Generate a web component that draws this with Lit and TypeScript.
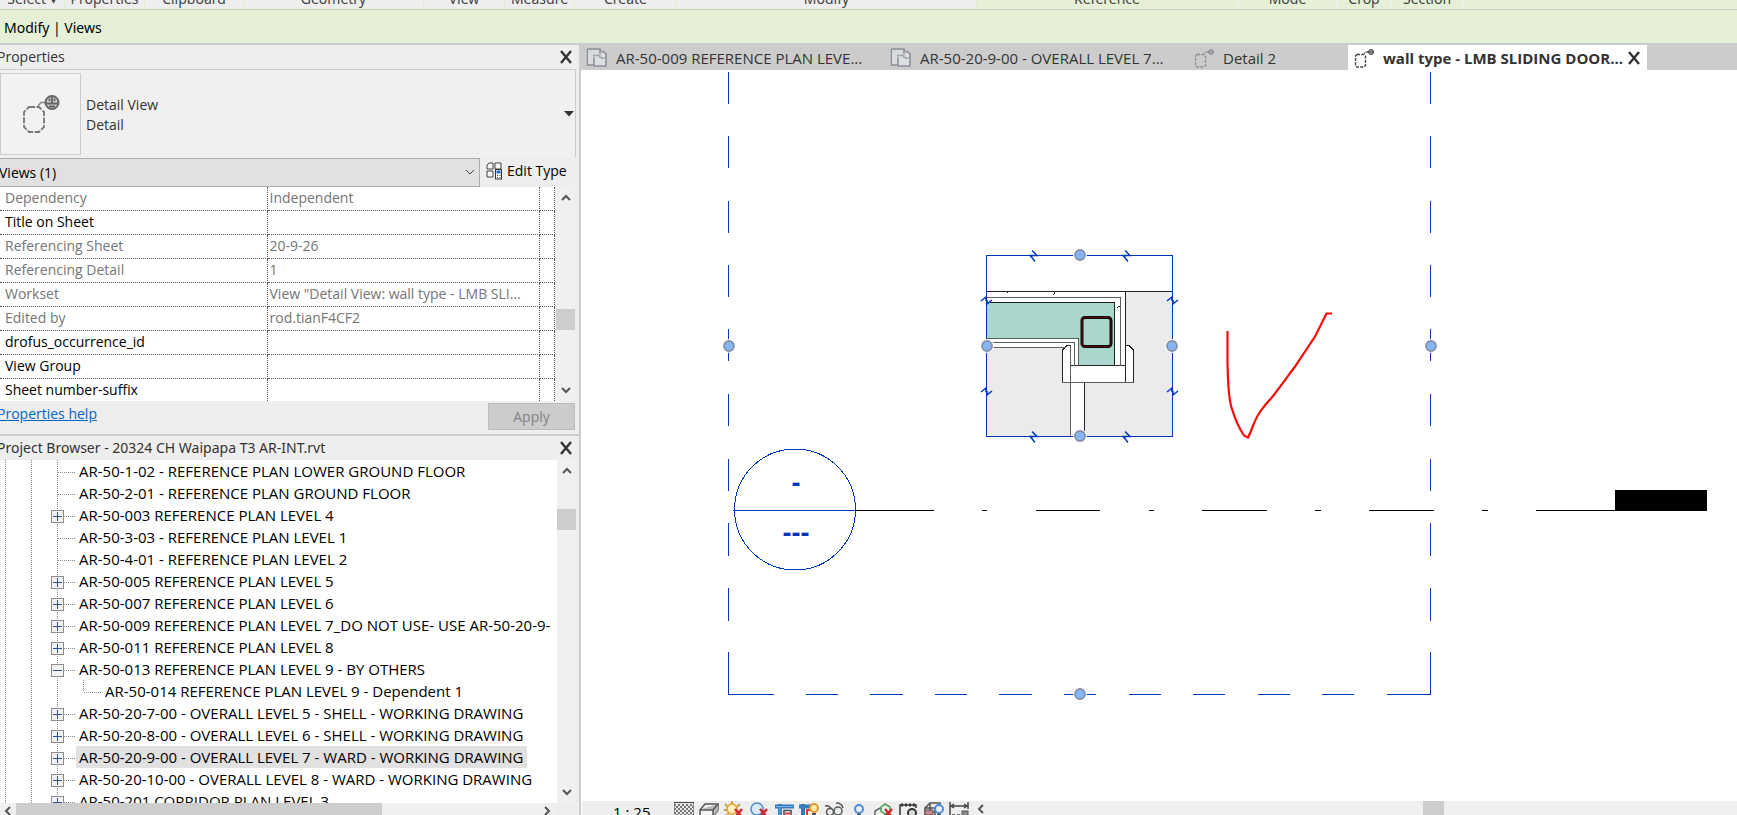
import { LitElement, html, svg, css, nothing } from "lit";
import { customElement, property } from "lit/decorators.js";
import { classMap } from "lit/directives/class-map.js";

const chevron = (dir: string) => {
  const paths: Record<string, string> = {
    up: "M3 9l4-4 4 4",
    down: "M3 5l4 4 4-4",
    left: "M9 3l-4 4 4 4",
    right: "M5 3l4 4-4 4",
  };
  return html`<svg width="14" height="14" viewBox="0 0 14 14" aria-hidden="true">
    <path d=${paths[dir]} fill="none" stroke="#555" stroke-width="2" />
  </svg>`;
};

const cross = html`<svg width="14" height="14" viewBox="0 0 14 14" aria-hidden="true">
  <path d="M2 1L12 13M12 1L2 13" fill="none" stroke="#333" stroke-width="2.4" />
</svg>`;

const detailIcon = (tone: string) => html`<svg width="20" height="20" viewBox="0 0 20 20" aria-hidden="true">
  <path d="M3 6.500H10L11.500 8V17.500L10 19H3L1.500 17.500V8Z" fill="none" stroke=${tone} stroke-width="1.400" stroke-dasharray="3 1.300" />
  <path d="M10 6L11.500 4H14" fill="none" stroke=${tone} />
  <circle cx="17" cy="4" r="2.500" fill="#aaa" stroke=${tone} />
  <path d="M13 4h7" stroke=${tone} />
</svg>`;

const detailIconLarge = html`<svg width="40" height="42" viewBox="0 0 40 42" aria-hidden="true">
  <path d="M8 14H18L23 19V34L18 39H8L3 34V19Z" fill="none" stroke="#777" stroke-width="1.800" stroke-dasharray="6 1.500" />
  <path d="M17 13L20 9.500H25" fill="none" stroke="#888" stroke-width="1.500" />
  <circle cx="31" cy="9.500" r="6.500" fill="#ccc" stroke="#666" stroke-width="2" />
  <path d="M24 10.500H38M31 4V10M28.500 5.500V8M33.500 5.500V8M28 13.500H34" stroke="#666" stroke-width="1.800" />
</svg>`;

const planIcon = html`<svg width="21" height="19" viewBox="0 0 21 19" aria-hidden="true">
  <path d="M1.500 1H14V5M8 17H1.500V1" fill="#d4d6d9" stroke="#8b8f96" stroke-width="1.600" />
  <path d="M2 2H13V16H2Z" fill="#d8dadd" />
  <path d="M14 3.500H17L20 6V18H8V12" fill="#dcdee1" stroke="#8b8f96" stroke-width="1.600" />
  <path d="M8 12V7.500H14M14 4V10H19" fill="none" stroke="#8b8f96" stroke-width="1.400" stroke-dasharray="2.500 1" />
</svg>`;

@customElement("scroll-strip")
export class ScrollStrip extends LitElement {
  @property() orientation = "vertical";
  @property({ type: Number }) start = 0;
  @property({ type: Number }) size = 20;
  @property() ends = "both";

  static styles = css`
    :host { display: flex; background: #f0f0f0; }
    :host([orientation="vertical"]) { width: 19px; flex-direction: column; }
    .end { display: flex; flex: none; align-items: center; justify-content: center; padding: 0; border: 0; background: none; width: 19px; height: 22px; }
    .row .end { width: 16px; height: 16px; }
    .strip { display: flex; flex: 1; min-width: 0; min-height: 0; flex-direction: column; }
    .strip.row { flex-direction: row; }
    .track { display: flex; flex: 1; min-width: 0; min-height: 0; flex-direction: column; }
    .row .track { flex-direction: row; }
    .thumb { flex: none; background: #cdcdcd; }
  `;

  render() {
    const v = this.orientation === "vertical";
    const side = v ? "height" : "width";
    return html`<div class=${classMap({ strip: true, row: !v })}>
      <button class="end" aria-label="Scroll back">${chevron(v ? "up" : "left")}</button>
      <div class="track">
        <div style=${`${side}:${this.start}%`}></div>
        <div class="thumb" style=${`${side}:${this.size}%`}></div>
      </div>
      ${this.ends === "both"
        ? html`<button class="end" aria-label="Scroll forward">${chevron(v ? "down" : "right")}</button>`
        : nothing}
    </div>`;
  }
}

interface Row { name: string; value?: string; locked?: boolean }
const rows: Row[] = [
  { name: "Dependency", value: "Independent", locked: true },
  { name: "Title on Sheet" },
  { name: "Referencing Sheet", value: "20-9-26", locked: true },
  { name: "Referencing Detail", value: "1", locked: true },
  { name: "Workset", value: 'View "Detail View: wall type - LMB SLI...', locked: true },
  { name: "Edited by", value: "rod.tianF4CF2", locked: true },
  { name: "drofus_occurrence_id" },
  { name: "View Group" },
  { name: "Sheet number-suffix" },
];

@customElement("properties-panel")
export class PropertiesPanel extends LitElement {
  static styles = css`
    :host { display: block; background: #eee; color: #333; }
    button { font: inherit; color: inherit; padding: 0; border: 0; background: none; }
    .head { display: flex; align-items: center; justify-content: space-between; height: 24px; padding-right: 6px; margin-left: -3px; line-height: 24px; }
    .head button { display: flex; }
    .type { display: flex; align-items: center; height: 88px; border: 1px solid #ccc; border-width: 1px 1px 0 0; margin-right: 3px; background: #f0f0f0; box-sizing: border-box; }
    .thumb { display: flex; align-items: center; justify-content: center; width: 81px; height: 82px; border: 1px solid #ccc; background: #f2f2f2; box-sizing: border-box; }
    .names { flex: 1; padding: 2px 0 0 5px; line-height: 20px; }
    .drop { width: 11px; height: 12px; display: flex; align-items: center; }
    .filter { display: flex; align-items: center; height: 30px; }
    .combo { display: grid; align-items: center; width: 480px; flex: none; }
    .combo select { grid-area: 1 / 1; appearance: none; height: 29px; border: 1px solid #adadad; border-left: 0; border-radius: 0; background: #e1e1e1; font: inherit; color: #000; padding: 1px 0 0; text-indent: -1px; }
    .combo svg { grid-area: 1 / 1; justify-self: end; margin-right: 3px; pointer-events: none; }
    .edit { display: flex; align-items: center; gap: 4px; padding: 0 0 2px 6px; color: #000; }
    .grid { display: flex; height: 214px; overflow: hidden; background: #eee; padding-right: 4px; }
    .clip { flex: 1; overflow: hidden; background: #fff; border-right: 1px solid #eee; }
    table { width: 100%; table-layout: fixed; border-collapse: collapse; color: #000; }
    th, td { height: 22px; padding: 0 0 1px; font-weight: 400; text-align: left; line-height: 22px; border-bottom: 1px dotted #555; border-right: 1px dotted #555; white-space: nowrap; overflow: hidden; }
    th { padding-left: 5px; }
    td { padding-left: 2px; }
    .name { width: 267px; }
    .more { width: 15px; }
    .locked { color: #757575; }
    .foot { display: flex; align-items: flex-start; justify-content: space-between; height: 33px; padding-right: 4px; margin-left: -3px; }
    .foot a { color: #0563c1; line-height: 26px; }
    .apply { width: 87px; height: 27px; margin-top: 2px; background: #ccc; border: 1px solid #bcbcbc; color: #838383; }
  `;

  render() {
    return html`
      <div class="head"><span>Properties</span><button aria-label="Close">${cross}</button></div>
      <div class="type">
        <div class="thumb">${detailIconLarge}</div>
        <div class="names"><div>Detail View</div><div>Detail</div></div>
        <button class="drop" aria-label="Change type">
          <svg width="10" height="6" viewBox="0 0 10 6"><path d="M0 0H10L5 5.500Z" fill="#333" /></svg>
        </button>
      </div>
      <div class="filter">
        <div class="combo">
          <select aria-label="Element filter"><option>Views (1)</option></select>
          <svg width="14" height="14" viewBox="0 0 14 14"><path d="M3 5l4 4 4-4" fill="none" stroke="#444" /></svg>
        </div>
        <button class="edit">
          <svg width="17" height="18" viewBox="0 0 17 18" aria-hidden="true">
            <path d="M1 3L3 1H7V7H1ZM9 1H15V7H9ZM1 9H7V15H1Z" fill="#f5f5f5" stroke="#444" />
            <rect x="9.500" y="7.500" width="6" height="9.500" fill="#fff" stroke="#333" />
            <rect x="10.500" y="8.500" width="4" height="3" fill="#1b66c9" />
            <path d="M11 13.500h1m1.500 0h1M11 15.500h1m1.500 0h1" stroke="#333" />
          </svg>
          <span>Edit Type</span>
        </button>
      </div>
      <div class="grid">
        <div class="clip">
          <table>
            <colgroup><col class="name" /><col /><col class="more" /></colgroup>
            <tbody>
              ${rows.map((r) => html`<tr class=${classMap({ locked: !!r.locked })}>
                <th scope="row">${r.name}</th><td>${r.value ?? nothing}</td><td></td>
              </tr>`)}
            </tbody>
          </table>
        </div>
        <scroll-strip orientation="vertical" start="59" size="12"></scroll-strip>
      </div>
      <div class="foot"><a href="#help">Properties help</a><button class="apply" disabled>Apply</button></div>
    `;
  }
}

interface Node { label: string; box?: "plus" | "minus"; child?: boolean; current?: boolean }
const nodes: Node[] = [
  { label: "AR-50-1-02 - REFERENCE PLAN LOWER GROUND FLOOR" },
  { label: "AR-50-2-01 - REFERENCE PLAN GROUND FLOOR" },
  { label: "AR-50-003 REFERENCE PLAN LEVEL 4", box: "plus" },
  { label: "AR-50-3-03 - REFERENCE PLAN LEVEL 1" },
  { label: "AR-50-4-01 - REFERENCE PLAN LEVEL 2" },
  { label: "AR-50-005 REFERENCE PLAN LEVEL 5", box: "plus" },
  { label: "AR-50-007 REFERENCE PLAN LEVEL 6", box: "plus" },
  { label: "AR-50-009 REFERENCE PLAN LEVEL 7_DO NOT USE- USE AR-50-20-9-00", box: "plus" },
  { label: "AR-50-011 REFERENCE PLAN LEVEL 8", box: "plus" },
  { label: "AR-50-013 REFERENCE PLAN LEVEL 9 - BY OTHERS", box: "minus" },
  { label: "AR-50-014 REFERENCE PLAN LEVEL 9 - Dependent 1", child: true },
  { label: "AR-50-20-7-00 - OVERALL LEVEL 5 - SHELL - WORKING DRAWING", box: "plus" },
  { label: "AR-50-20-8-00 - OVERALL LEVEL 6 - SHELL - WORKING DRAWING", box: "plus" },
  { label: "AR-50-20-9-00 - OVERALL LEVEL 7 - WARD - WORKING DRAWING", box: "plus", current: true },
  { label: "AR-50-20-10-00 - OVERALL LEVEL 8 - WARD - WORKING DRAWING", box: "plus" },
  { label: "AR-50-201 CORRIDOR PLAN LEVEL 3", box: "plus" },
];

@customElement("project-browser")
export class ProjectBrowser extends LitElement {
  static styles = css`
    :host { display: flex; flex-direction: column; min-height: 0; background: #eee; color: #333; }
    .head { display: flex; flex: none; align-items: center; justify-content: space-between; height: 24px; padding-right: 6px; margin-left: -3px; font-family: "Noto Sans", "Open Sans", sans-serif; line-height: 24px; }
    .head button { display: flex; padding: 0; border: 0; background: none; }
    .body { display: flex; flex: 1; min-height: 0; padding-right: 3px; }
    ul { flex: 1; min-width: 0; margin: 0; padding: 0; list-style: none; overflow: hidden; background: #fff; color: #000; border-right: 6px solid #fff; font-size: 15px; }
    li { display: flex; height: 22px; line-height: 22px; white-space: nowrap; }
    li svg { flex: none; }
    .label { padding: 0 3px; }
    .current { background: #e1e1e1; }
    scroll-strip.across { flex: none; height: 12px; overflow: hidden; margin-right: 24px; }
  `;

  private branch(n: Node) {
    const w = n.child ? 102 : 76;
    return html`<svg width=${w} height="22" aria-hidden="true" shape-rendering="crispEdges">
      <path d="M5.500 0V22M31.500 0V22M57.500 0V22" stroke="#888" stroke-dasharray="1 1" />
      ${n.child
        ? svg`<path d="M83.500 0V12M84 12.500H102" fill="none" stroke="#888" stroke-dasharray="1 1" />`
        : svg`<path d="M58 12.500H76" stroke="#888" stroke-dasharray="1 1" />`}
      ${n.box
        ? svg`<rect x="51.500" y="6.500" width="12" height="12" fill="#f2f2f2" stroke="#8c8c8c" />
            <path d=${n.box === "plus" ? "M53 12.500H62M57.500 8V17" : "M53 12.500H62"} stroke="#34529c" />`
        : nothing}
    </svg>`;
  }

  render() {
    return html`
      <div class="head"><span>Project Browser - 20324 CH Waipapa T3 AR-INT.rvt</span><button aria-label="Close">${cross}</button></div>
      <div class="body">
        <ul>
          ${nodes.map((n) => html`<li>${this.branch(n)}<span class=${classMap({ label: true, current: !!n.current })}>${n.label}</span></li>`)}
        </ul>
        <scroll-strip orientation="vertical" start="9" size="7"></scroll-strip>
      </div>
      <scroll-strip class="across" orientation="horizontal" start="0" size="70"></scroll-strip>
    `;
  }
}

const sideDashes = [[72, 104], [136, 168], [201, 233], [265, 297], [329, 361], [394, 426], [459, 491], [523, 556], [588, 621], [652, 695]];
const baseDashes = [[728, 774], [806, 838], [870, 903], [935, 967], [999, 1032], [1064, 1096], [1129, 1161], [1193, 1225], [1258, 1290], [1322, 1354], [1387, 1431]];
const axisDashes = [[855, 934], [982, 987], [1036, 1100], [1149, 1154], [1202, 1267], [1315, 1321], [1369, 1434], [1482, 1488], [1536, 1615]];
const grips = [[729, 346], [1431, 346], [1080, 694], [1080, 255], [1080, 436], [987, 346], [1172, 346]];

@customElement("drawing-view")
export class DrawingView extends LitElement {
  static styles = css`
    :host { display: block; min-height: 0; overflow: hidden; background: #fff; }
    svg { display: block; width: 100%; height: 100%; }
    .mark { font: 700 27px "Liberation Sans", sans-serif; fill: #0039b8; text-anchor: middle; }
  `;

  render() {
    const vertical = (x: number) => sideDashes.map(([a, b]) => `M${x} ${a}V${b}`).join("");
    const horizontal = (y: number, list: number[][]) => list.map(([a, b]) => `M${a} ${y}H${b}`).join("");
    const breakH = (x: number, y: number) => svg`<path d=${`M${x - 1} ${y - 5}l5 5h-4M${x - 4} ${y}h4l-2 1 4 5`} />`;
    const breakV = (x: number, y: number) => svg`<path d=${`M${x - 6} ${y}l5-4v4M${x} ${y - 1}v4l5-4`} />`;
    return html`<svg role="img" aria-label="Wall detail drawing">
      <g transform="translate(-582 -70)">
        <g fill="none" stroke="#0039b8" shape-rendering="crispEdges">
          <path d=${vertical(728.5)} /><path d=${vertical(1430.5)} />
          <path d=${horizontal(694.5, baseDashes)} />
        </g>
        <g shape-rendering="crispEdges">
          <path d="M1126 292H1172V436H1084V382H1134V350L1130 345H1126ZM987 347H1063V382H1070V436H987Z" fill="#ebebeb" />
          <path d="M987 303H1114V365H1078V339H987Z" fill="#a9d7cd" />
          <path d="M1062.500 382.500V350L1067 345.500H1070.500V382.500ZM1125.500 382.500V345.500H1129L1133.500 350V382.500Z" fill="#fff" />
        </g>
        <g fill="none" stroke="#222" shape-rendering="crispEdges">
          <path d="M987 291.500H1172M1125.500 291V382.500M987 302.500H1114.500V365.500M1070.500 365.500H1125.500M1084.500 382V436" />
          <path d="M1062.500 382.500V350L1067 345.500H1070.500M1125.500 345.500H1129L1133.500 350V382.500M1007 292.500h1" />
          <path d="M1053 295l2-2.500M1117 308l2.500-2" />
        </g>
        <g fill="none" stroke="#606060" shape-rendering="crispEdges">
          <path d="M987 297.500H1120.500V365.500M987 338.500H1078.500V365.500M987 342.500H1074.500V365.500M987 347.500H1066M1070.500 345V436M1062 382.500H1134" />
        </g>
        <rect x="1082" y="317.500" width="29" height="29" rx="3" fill="none" stroke="#110505" stroke-width="3" />
        <rect x="1082" y="317.500" width="29" height="29" rx="3" fill="none" stroke="#5a0f12" />
        <rect x="986.500" y="255.500" width="186" height="181" fill="none" stroke="#0039b8" shape-rendering="crispEdges" />
        <g fill="none" stroke="#0039b8" stroke-width="1.500">
          ${breakH(1033, 255.5)}${breakH(1126, 255.5)}${breakH(1033, 436.5)}${breakH(1126, 436.5)}
          ${breakV(987, 301)}${breakV(987, 392)}${breakV(1173, 301)}${breakV(1173, 392)}
        </g>
        <circle cx="795" cy="509.500" r="60.500" fill="none" stroke="#0039b8" shape-rendering="crispEdges" />
        <path d="M733 510.500H855" stroke="#0039b8" shape-rendering="crispEdges" />
        <path d=${horizontal(510.5, axisDashes)} stroke="#000" shape-rendering="crispEdges" />
        <rect x="1615" y="490" width="92" height="21" fill="#000" />
        <text class="mark" x="796" y="492">-</text>
        <text class="mark" x="796" y="542">---</text>
        ${grips.map(([x, y]) => svg`<circle cx=${x} cy=${y} r="7" fill="#fff" fill-opacity="0.900" />
          <circle cx=${x} cy=${y} r="5" fill="#86b5f6" stroke="#8392a6" stroke-width="1.800" />`)}
        <path d="M1227.500 331V363C1228 380 1228 398 1232 409C1235 419 1239 428 1244 435.500L1248 437.500C1252 430 1254 421 1259 413.500C1263 407 1268 402 1273 396C1281 386 1288 376 1295 366.500L1315 336.500L1326.500 313.500H1332" fill="none" stroke="#fa0a0a" stroke-width="2.200" />
      </g>
    </svg>`;
  }
}

const redX = svg`<path d="M11 8l7 8M18 8l-7 8" stroke="#d0282c" stroke-width="2.500" />`;
const bulb = (x: number, y: number, tone: string) => svg`<circle cx=${x} cy=${y} r="4" fill="#e4f1ff" stroke=${tone} stroke-width="2" /><path d=${`M${x - 2} ${y + 6}h4`} stroke="#555" stroke-width="3" />`;
const tools = [
  { name: "Detail level", art: svg`<path d="M0 1.500H20V16H0Z" fill="#e8e8e8" stroke="#444" /><path d="M0 4H20M0 8H20M0 12H20" stroke="#777" stroke-width="2" stroke-dasharray="2 2" /><path d="M2 6H20M2 10H20M2 14H20" stroke="#777" stroke-width="2" stroke-dasharray="2 2" />` },
  { name: "Visual style", art: svg`<path d="M1 9L6 3H19V9L14 16H1Z" fill="#f4f4f4" stroke="#555" stroke-width="1.500" /><path d="M1 8.500H14V16L19 9V3Z" fill="#bbb" /><path d="M1 9H14L19 3M14 9V16" fill="none" stroke="#555" stroke-width="1.500" />` },
  { name: "Sun path", art: svg`<path d="M8 0V3M1 3l3 3M16 3l-3 3M0 9H3M2 15l3-3" stroke="#caa04a" stroke-width="2" /><circle cx="8" cy="8" r="5" fill="#ffeebc" stroke="#dda338" stroke-width="1.500" />${redX}` },
  { name: "Shadows", art: svg`<path d="M4 15q8 3 11-6" fill="none" stroke="#999" stroke-width="3" /><circle cx="8" cy="8" r="6" fill="#d7ebfb" stroke="#4f8cc9" stroke-width="1.500" />${redX}` },
  { name: "Crop view", art: svg`<path d="M6 3V16M1 5.500H20" stroke="#3478bd" stroke-width="4" /><path d="M2 5.500H19M6 5V16" stroke="#7fb2e0" /><path d="M10 16V9.500H17V16" fill="#fff" stroke="#3d4a59" stroke-width="1.500" /><path d="M11 12.500h5" stroke="#e33" stroke-width="2" />` },
  { name: "Show crop region", art: svg`<path d="M4 3V16M0 5.500H14" stroke="#3478bd" stroke-width="4" /><path d="M8 16V9H13" fill="none" stroke="#e33" stroke-width="2" /><circle cx="15" cy="7" r="4" fill="#fff0b0" stroke="#eb9a27" stroke-width="2" /><path d="M13 13.500h4" stroke="#555" stroke-width="3" />` },
  { name: "Temporary hide", art: svg`<path d="M1 5q5-1 8 5M12 2q6 0 7 5" fill="none" stroke="#555" stroke-width="1.500" /><circle cx="6" cy="11" r="3.500" fill="#e9edf0" stroke="#555" stroke-width="1.500" /><circle cx="14" cy="10" r="4" fill="#e9edf0" stroke="#555" stroke-width="1.500" />` },
  { name: "Reveal hidden", art: bulb(10, 8, "#4c8ed8") },
  { name: "Worksharing display", art: svg`<path d="M1 10l5-3 5 3v5H1Z" fill="#e4f3e6" stroke="#667" stroke-width="1.500" /><path d="M7 6l4-3 5 3v5l-5 2-4-3Z" fill="#e4f3e6" stroke="#4d9a57" stroke-width="1.500" />${redX}` },
  { name: "View properties", art: svg`<path d="M1 16V4H17V7" fill="#eee" stroke="#333" stroke-width="1.500" /><path d="M2 4H18" stroke="#333" stroke-width="3" stroke-dasharray="2 2" /><circle cx="13" cy="12" r="4" fill="#ddd" stroke="#333" stroke-width="2" />` },
  { name: "Analytical model", art: svg`<path d="M1 7l5-5h10v7M1 7h10v9H1ZM6 2v14M1 11h10" fill="#eaeaea" stroke="#555" stroke-width="1.500" /><path d="M1 14V9h8v5z" fill="#c88" stroke="#555" />${bulb(15, 8, "#4c8ed8")}` },
  { name: "Reveal constraints", art: svg`<path d="M1 1V16M19 1V8M1 5H19M5 3L2 5l3 2M15 3l3 2-3 2" fill="none" stroke="#444" stroke-width="1.500" /><path d="M3 14H11" stroke="#444" stroke-width="1.500" stroke-dasharray="3 2" /><rect x="13" y="10" width="6" height="6" fill="#888" stroke="#555" />` },
];

@customElement("view-controls")
export class ViewControls extends LitElement {
  static styles = css`
    :host { display: flex; height: 14px; overflow: hidden; background: #eee; color: #000; margin-left: 1px; }
    .scale { width: 92px; flex: none; box-sizing: border-box; padding-left: 31px; line-height: 22px; white-space: nowrap; font-size: 15px; }
    .tools { display: flex; flex: none; gap: 5px; }
    button { display: block; width: 20px; height: 20px; padding: 0; border: 0; background: none; }
    scroll-strip { flex: 1; margin-left: 4px; }
  `;

  render() {
    return html`
      <span class="scale">1 : 25</span>
      <div class="tools">
        ${tools.map((t) => html`<button aria-label=${t.name}><svg width="20" height="20" viewBox="0 0 20 20" fill="none">${t.art}</svg></button>`)}
      </div>
      <scroll-strip orientation="horizontal" start="58" size="2.8" ends="one"></scroll-strip>
    `;
  }
}

const groups = [
  { label: "Select ▾", width: 65 },
  { label: "Properties", width: 80 },
  { label: "Clipboard", width: 99 },
  { label: "Geometry", width: 180 },
  { label: "View", width: 81 },
  { label: "Measure", width: 70 },
  { label: "Create", width: 102 },
  { label: "Modify", width: 300 },
  { label: "Reference", width: 262, context: true },
  { label: "Mode", width: 99, context: true },
  { label: "Crop", width: 54, context: true },
  { label: "Section", width: 72, context: true },
];

@customElement("app-root")
export class AppRoot extends LitElement {
  static styles = css`
    :host { display: flex; flex-direction: column; height: 100vh; overflow: hidden; background: #fff; font: 14px/20px "Open Sans", "Noto Sans", sans-serif; color: #333; }
    .ribbon { display: flex; flex: none; height: 9px; background: #e5f0d6; border-bottom: 1px solid #ccc; overflow: hidden; font-family: "Noto Sans", "Open Sans", sans-serif; line-height: 18px; }
    .group { display: flex; align-items: flex-end; justify-content: center; box-sizing: border-box; height: 8px; background: #eee; border-right: 1px solid #e0edcf; color: #444; white-space: nowrap; }
    .context { background: #e5f0d6; border-right: 2px solid #eee; }
    .mode { flex: none; height: 33px; line-height: 35px; padding-left: 4px; background: #e5f0d6; color: #000; font-family: "Noto Sans", "Open Sans", sans-serif; }
    .work { display: flex; flex: 1; min-height: 0; border-top: 2px solid #ccc; }
    .side { display: flex; flex-direction: column; flex: none; width: 579px; overflow: hidden; border-right: 2px solid #ccc; }
    properties-panel { flex: none; border-bottom: 2px solid #ccc; }
    project-browser { flex: 1; }
    .main { display: flex; flex: 1; flex-direction: column; min-width: 0; }
    .tabs { display: flex; flex: none; height: 25px; background: #ccc; }
    .tab { display: flex; align-items: center; gap: 9px; flex: none; width: 304px; box-sizing: border-box; padding: 0 5px; border: 0; background: none; font: inherit; font-size: 15px; color: #333; white-space: nowrap; text-align: left; }
    .short { width: 159px; }
    .active { width: 299px; padding: 0 6px; background: #fff; font-weight: 700; }
    .tab svg { flex: none; }
    .text { flex: 1; min-width: 0; }
    drawing-view { flex: 1; margin-left: 1px; }
    view-controls { flex: none; }
  `;

  render() {
    return html`
      <div class="ribbon">
        ${groups.map((g) => html`<div class=${classMap({ group: true, context: !!g.context })} style=${`width:${g.width}px`}>${g.label}</div>`)}
      </div>
      <div class="mode">Modify | Views</div>
      <div class="work">
        <div class="side">
          <properties-panel></properties-panel>
          <project-browser></project-browser>
        </div>
        <div class="main">
          <div class="tabs" role="tablist">
            <button class="tab" role="tab">${planIcon}<span class="text">AR-50-009 REFERENCE PLAN LEVE...</span></button>
            <button class="tab" role="tab">${planIcon}<span class="text">AR-50-20-9-00 - OVERALL LEVEL 7...</span></button>
            <button class="tab short" role="tab">${detailIcon("#8b8f96")}<span class="text">Detail 2</span></button>
            <button class="tab active" role="tab" aria-selected="true">${detailIcon("#444")}<span class="text">wall type - LMB SLIDING DOOR...</span>${cross}</button>
          </div>
          <drawing-view></drawing-view>
          <view-controls></view-controls>
        </div>
      </div>
    `;
  }
}
